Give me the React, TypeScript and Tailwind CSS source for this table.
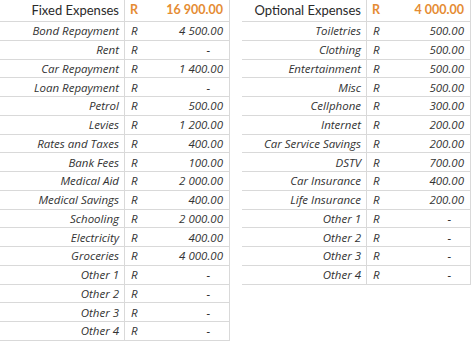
type Row = { label: string; amount: string };

const fixed: Row[] = [
  { label: 'Bond Repayment', amount: '4 500.00' },
  { label: 'Rent', amount: '-' },
  { label: 'Car Repayment', amount: '1 400.00' },
  { label: 'Loan Repayment', amount: '-' },
  { label: 'Petrol', amount: '500.00' },
  { label: 'Levies', amount: '1 200.00' },
  { label: 'Rates and Taxes', amount: '400.00' },
  { label: 'Bank Fees', amount: '100.00' },
  { label: 'Medical Aid', amount: '2 000.00' },
  { label: 'Medical Savings', amount: '400.00' },
  { label: 'Schooling', amount: '2 000.00' },
  { label: 'Electricity', amount: '400.00' },
  { label: 'Groceries', amount: '4 000.00' },
  { label: 'Other 1', amount: '-' },
  { label: 'Other 2', amount: '-' },
  { label: 'Other 3', amount: '-' },
  { label: 'Other 4', amount: '-' },
];

const optional: Row[] = [
  { label: 'Toiletries', amount: '500.00' },
  { label: 'Clothing', amount: '500.00' },
  { label: 'Entertainment', amount: '500.00' },
  { label: 'Misc', amount: '500.00' },
  { label: 'Cellphone', amount: '300.00' },
  { label: 'Internet', amount: '200.00' },
  { label: 'Car Service Savings', amount: '200.00' },
  { label: 'DSTV', amount: '700.00' },
  { label: 'Car Insurance', amount: '400.00' },
  { label: 'Life Insurance', amount: '200.00' },
  { label: 'Other 1', amount: '-' },
  { label: 'Other 2', amount: '-' },
  { label: 'Other 3', amount: '-' },
  { label: 'Other 4', amount: '-' },
];

function ExpenseTable({ title, total, rows }: { title: string; total: string; rows: Row[] }) {
  return (
    <div className="flex flex-col">
      {/* Header */}
      <div className="flex h-[22px] border-b border-[#d9d9d9] font-['Lato','Liberation_Sans',sans-serif]">
        <div className="w-[125px] shrink-0 flex items-center justify-end pr-[5px] border-r border-[#d9d9d9] text-[13px] text-[#2a2a2a]">
          {title}
        </div>
        <div className="flex-1 flex items-center justify-between pl-[5px] pr-[6px] border-r border-[#d9d9d9] text-[12.5px] font-bold text-[#e58c33]">
          <span>R</span>
          <span>{total}</span>
        </div>
      </div>

      {rows.map((r, i) => (
        <div key={i} className="flex h-[18.75px] border-b border-[#d9d9d9] italic text-[11.5px] text-[#333] font-['Open_Sans','Liberation_Sans',sans-serif]">
          <div className="w-[125px] shrink-0 flex items-center justify-end pr-[5px] border-r border-[#d9d9d9]">
            {r.label}
          </div>
          <div className="flex-1 flex items-center justify-between pl-[6px] pr-[6px] border-r border-[#d9d9d9]">
            <span>R</span>
            {r.amount === '-' ? <span className="pr-[13px]">-</span> : <span>{r.amount}</span>}
          </div>
        </div>
      ))}
    </div>
  );
}

export default function App() {
  return (
    <div className="w-[474px] h-[345px] bg-white overflow-hidden">
      <div className="flex items-start">
        <div className="w-[230px]">
          <ExpenseTable title="Fixed Expenses" total="16 900.00" rows={fixed} />
        </div>
        <div className="w-[229px] ml-[12px]">
          <ExpenseTable title="Optional Expenses" total="4 000.00" rows={optional} />
        </div>
      </div>
    </div>
  );
}
